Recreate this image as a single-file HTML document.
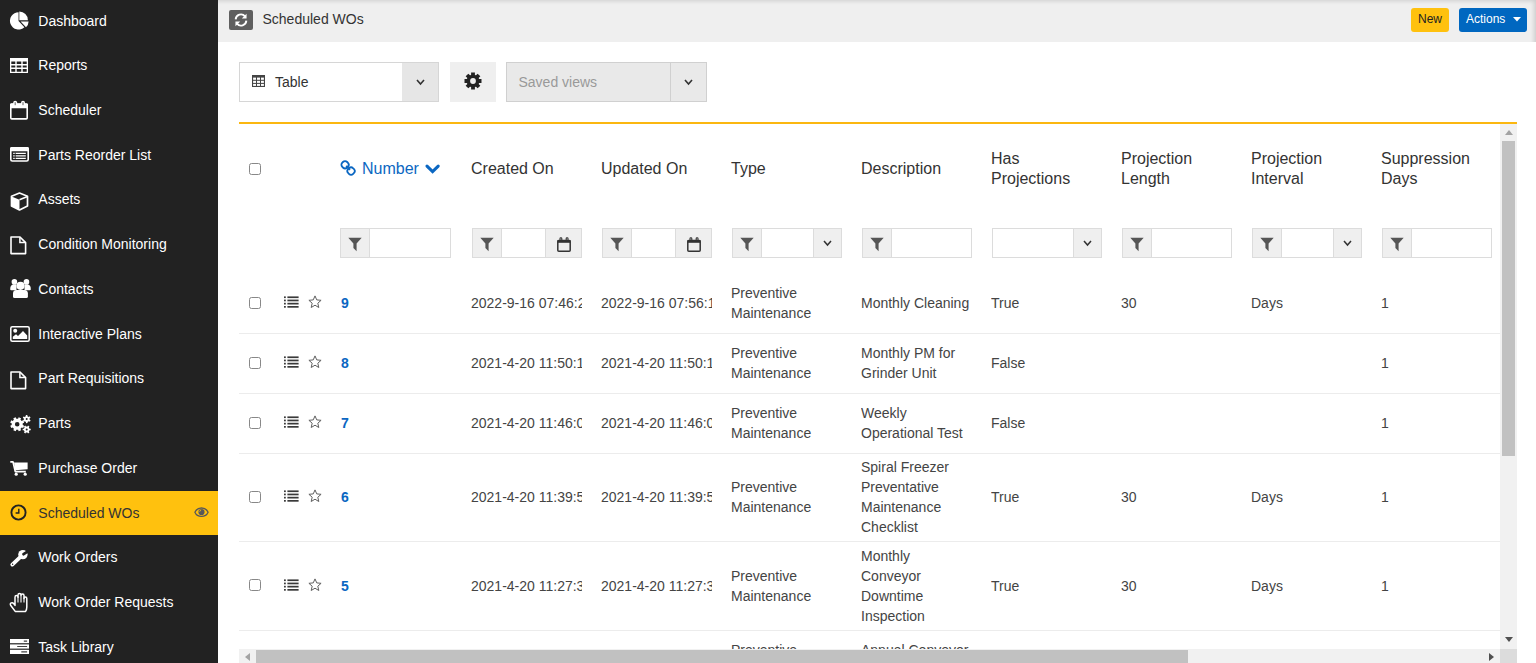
<!DOCTYPE html>
<html><head><meta charset="utf-8">
<style>
*{box-sizing:border-box;margin:0;padding:0}
html,body{width:1536px;height:663px;overflow:hidden;background:#fff;font-family:"Liberation Sans",sans-serif;color:#333}
.abs{position:absolute}
#sb{position:absolute;left:0;top:0;width:218px;height:663px;background:#222;overflow:hidden}
.sbt{font-size:14px;white-space:nowrap}
#hdr{position:absolute;left:218px;top:0;width:1318px;height:41.5px;background:#efefef;box-shadow:inset -4px 3px 4px -2px rgba(0,0,0,.14)}
.th{position:absolute;font-size:16px;line-height:20px;color:#333;white-space:nowrap}
.flt{position:absolute;top:228px;height:30px;border:1px solid #dcdcdc;background:#fff}
.flt .ad{position:absolute;top:0;height:28px;background:#efefef}
.row{position:absolute;left:239px;width:1261px;border-bottom:1px solid #ececec}
.c{position:absolute;display:flex;align-items:center;font-size:14px;line-height:20px;color:#444;overflow:hidden;white-space:nowrap}
.cb{position:absolute;width:12px;height:12px;border:1.2px solid #888;border-radius:2.5px;background:#fff}
</style></head><body>
<div id="sb">
<div class="abs sbt" style="left:38.3px;top:-1.50px;height:44.74px;line-height:44.74px;color:#fff">Dashboard</div>
<svg class="abs" style="left:8px;top:10px" width="22" height="22" viewBox="0 0 22 22" ><path d="M10.55 10.9 V2.3 A8.6 8.6 0 1 0 16.42 17.19 Z" fill="#fff"/><path d="M11.3 10.2 V1.6 A8.6 8.6 0 0 1 19.9 10.2 Z" fill="#fff"/><path d="M12.6 11.4 H20.6 A8.1 8.1 0 0 1 18.0 17.2 Z" fill="#fff"/></svg>
<div class="abs sbt" style="left:38.3px;top:43.24px;height:44.74px;line-height:44.74px;color:#fff">Reports</div>
<svg class="abs" style="left:10px;top:58px" width="18" height="15" viewBox="0 0 18 15" ><rect x="0.5" y="0.5" width="17" height="14" rx="1" fill="none" stroke="#fff" stroke-width="1.6"/><rect x="0" y="0" width="18" height="3.5" fill="#fff"/><path d="M6 3v11M12 3v11M1 6.8h16M1 10.2h16" stroke="#fff" stroke-width="1.4"/></svg>
<div class="abs sbt" style="left:38.3px;top:87.98px;height:44.74px;line-height:44.74px;color:#fff">Scheduler</div>
<svg class="abs" style="left:10px;top:100px" width="18" height="20" viewBox="0 0 18 20" ><rect x="0.8" y="4" width="16.4" height="14.9" rx="1" fill="none" stroke="#fff" stroke-width="1.6"/><rect x="0" y="3.4" width="18" height="4.8" rx="1" fill="#fff"/><rect x="3.2" y="0.8" width="4" height="5.2" rx="2" fill="#fff"/><rect x="11" y="0.8" width="4" height="5.2" rx="2" fill="#fff"/><rect x="4.6" y="2.2" width="1.2" height="3" fill="#222" opacity=".6"/><rect x="12.4" y="2.2" width="1.2" height="3" fill="#222" opacity=".6"/></svg>
<div class="abs sbt" style="left:38.3px;top:132.72px;height:44.74px;line-height:44.74px;color:#fff">Parts Reorder List</div>
<svg class="abs" style="left:10px;top:147px" width="19" height="15" viewBox="0 0 19 15" ><rect x="0.8" y="0.8" width="17.4" height="13.2" rx="1.5" fill="none" stroke="#fff" stroke-width="1.6"/><rect x="0" y="0" width="19" height="4.2" rx="1.5" fill="#fff"/><path d="M3.2 6.4h12.6M3.2 8.9h12.6M3.2 11.4h12.6" stroke="#fff" stroke-width="1.1"/><path d="M5.2 5.5v7" stroke="#222" stroke-width="0.9"/></svg>
<div class="abs sbt" style="left:38.3px;top:177.46px;height:44.74px;line-height:44.74px;color:#fff">Assets</div>
<svg class="abs" style="left:9.5px;top:191.5px" width="19" height="19" viewBox="0 0 19 19" ><path d="M9.5 1 L17.5 4.2 L17.5 14 L9.5 18 L1.5 14 L1.5 4.2 Z" fill="none" stroke="#fff" stroke-width="1.7" stroke-linejoin="round"/><path d="M1.5 4.6 L9.5 7.8 L9.5 18 L1.5 14 Z" fill="#fff"/><path d="M9.5 7.8 L17.5 4.6" stroke="#fff" stroke-width="1.6"/></svg>
<div class="abs sbt" style="left:38.3px;top:222.20px;height:44.74px;line-height:44.74px;color:#fff">Condition Monitoring</div>
<svg class="abs" style="left:10px;top:236px" width="17" height="19" viewBox="0 0 17 19" ><path d="M1 1 H10 L15.6 6.6 V17.6 H1 Z" fill="none" stroke="#fff" stroke-width="1.6" stroke-linejoin="round"/><path d="M9.9 1.2 V6.6 H15.4" fill="none" stroke="#fff" stroke-width="1.5"/></svg>
<div class="abs sbt" style="left:38.3px;top:266.94px;height:44.74px;line-height:44.74px;color:#fff">Contacts</div>
<svg class="abs" style="left:9.8px;top:279.3px" width="21" height="20" viewBox="0 0 21 20" ><circle cx="4.4" cy="2.9" r="2.8" fill="#fff"/><circle cx="16.45" cy="2.9" r="2.8" fill="#fff"/><path d="M0.2 10.2 Q0.2 5.6 3.6 5.6 H6.5 V11.2 H1.2 Q0.2 11.2 0.2 10.2Z" fill="#fff"/><path d="M20.8 10.2 Q20.8 5.6 17.4 5.6 H14.5 V11.2 H19.8 Q20.8 11.2 20.8 10.2Z" fill="#fff"/><circle cx="10.5" cy="6.8" r="4.1" fill="#fff"/><path d="M3 17.6 V14.4 Q3 10.9 6.6 10.9 H14.4 Q17.9 10.9 17.9 14.4 V17.6 Q17.9 19.1 16.4 19.1 H4.5 Q3 19.1 3 17.6Z" fill="#fff"/></svg>
<div class="abs sbt" style="left:38.3px;top:311.68px;height:44.74px;line-height:44.74px;color:#fff">Interactive Plans</div>
<svg class="abs" style="left:10px;top:326px" width="20" height="16" viewBox="0 0 20 16" ><rect x="0.8" y="0.8" width="18.4" height="14.4" rx="1.5" fill="none" stroke="#fff" stroke-width="1.5"/><circle cx="5.2" cy="4.8" r="2" fill="#fff"/><path d="M2.8 13 V10.8 L6 8.2 L8 10 L13 5 L17.2 9.5 V13 Z" fill="#fff"/></svg>
<div class="abs sbt" style="left:38.3px;top:356.42px;height:44.74px;line-height:44.74px;color:#fff">Part Requisitions</div>
<svg class="abs" style="left:10px;top:370.5px" width="17" height="19" viewBox="0 0 17 19" ><path d="M1 1 H10 L15.6 6.6 V17.6 H1 Z" fill="none" stroke="#fff" stroke-width="1.6" stroke-linejoin="round"/><path d="M9.9 1.2 V6.6 H15.4" fill="none" stroke="#fff" stroke-width="1.5"/></svg>
<div class="abs sbt" style="left:38.3px;top:401.16px;height:44.74px;line-height:44.74px;color:#fff">Parts</div>
<svg class="abs" style="left:9.8px;top:414.5px" width="21" height="19" viewBox="0 0 21 19" ><path d="M12.73,10.07 L14.15,10.65 L13.16,13.06 L11.74,12.47 L10.50,13.73 L11.09,15.14 L8.69,16.14 L8.10,14.73 L6.33,14.73 L5.75,16.15 L3.34,15.16 L3.93,13.74 L2.67,12.50 L1.26,13.09 L0.26,10.69 L1.67,10.10 L1.67,8.33 L0.25,7.75 L1.24,5.34 L2.66,5.93 L3.90,4.67 L3.31,3.26 L5.71,2.26 L6.30,3.67 L8.07,3.67 L8.65,2.25 L11.06,3.24 L10.47,4.66 L11.73,5.90 L13.14,5.31 L14.14,7.71 L12.73,8.30 Z M9.5,9.2 A2.3 2.3 0 1 0 4.9,9.2 A2.3 2.3 0 1 0 9.5,9.2Z" fill="#fff" fill-rule="evenodd"/><path d="M19.62,4.78 L20.61,5.33 L19.85,6.73 L18.85,6.19 L17.57,6.97 L17.59,8.10 L16.00,8.14 L15.97,7.01 L14.65,6.29 L13.68,6.88 L12.85,5.51 L13.81,4.92 L13.78,3.42 L12.79,2.87 L13.55,1.47 L14.55,2.01 L15.83,1.23 L15.81,0.10 L17.40,0.06 L17.43,1.19 L18.75,1.91 L19.72,1.32 L20.55,2.69 L19.59,3.28 Z M17.7,4.1 A1.0 1.0 0 1 0 15.7,4.1 A1.0 1.0 0 1 0 17.7,4.1Z" fill="#fff" fill-rule="evenodd"/><path d="M19.59,13.70 L20.72,13.70 L20.72,15.30 L19.59,15.30 L18.84,16.60 L19.40,17.58 L18.02,18.38 L17.45,17.40 L15.95,17.40 L15.38,18.38 L14.00,17.58 L14.56,16.60 L13.81,15.30 L12.68,15.30 L12.68,13.70 L13.81,13.70 L14.56,12.40 L14.00,11.42 L15.38,10.62 L15.95,11.60 L17.45,11.60 L18.02,10.62 L19.40,11.42 L18.84,12.40 Z M17.7,14.5 A1.0 1.0 0 1 0 15.7,14.5 A1.0 1.0 0 1 0 17.7,14.5Z" fill="#fff" fill-rule="evenodd"/></svg>
<div class="abs sbt" style="left:38.3px;top:445.90px;height:44.74px;line-height:44.74px;color:#fff">Purchase Order</div>
<svg class="abs" style="left:10px;top:460.5px" width="19" height="16" viewBox="0 0 19 16" ><path d="M0.3 0.9 H3 L5.3 10.6 H15.8" fill="none" stroke="#fff" stroke-width="1.7" stroke-linejoin="round"/><path d="M4 1.6 H17.6 V8.3 L5.2 9.3 Z" fill="#fff"/><circle cx="6.2" cy="13.2" r="1.6" fill="#fff"/><circle cx="15.2" cy="13.2" r="1.6" fill="#fff"/></svg>
<div class="abs" style="left:0;top:491.3px;width:218px;height:43.4px;background:#ffc10e"></div>
<div class="abs sbt" style="left:38.3px;top:490.64px;height:44.74px;line-height:44.74px;color:#333">Scheduled WOs</div>
<svg class="abs" style="left:10px;top:504px" width="17" height="17" viewBox="0 0 17 17" ><circle cx="8.5" cy="8.5" r="7.1" fill="none" stroke="#222" stroke-width="1.9"/><path d="M8.8 4.8 V9.0 H5.6" fill="none" stroke="#222" stroke-width="1.4"/></svg>
<svg class="abs" style="left:194.3px;top:507.1px" width="16" height="11" viewBox="0 0 16 11" ><path d="M0.9 5.2 C3.4 -0.4, 11.6 -0.4, 14.1 5.2 C11.6 10.8, 3.4 10.8, 0.9 5.2Z" fill="none" stroke="#585858" stroke-width="1.3"/><circle cx="7.5" cy="5.0" r="3.1" fill="#585858"/><path d="M5.7 4.7 Q5.9 3.2 7.2 2.9" fill="none" stroke="#ffc10e" stroke-width="0.9"/></svg>
<div class="abs sbt" style="left:38.3px;top:535.38px;height:44.74px;line-height:44.74px;color:#fff">Work Orders</div>
<svg class="abs" style="left:9px;top:549px" width="20" height="19" viewBox="0 0 20 19" ><line x1="13.6" y1="5.8" x2="3.3" y2="15.6" stroke="#fff" stroke-width="3.8" stroke-linecap="round"/><circle cx="13.9" cy="5.6" r="4.7" fill="#fff"/><path d="M14.6 5.2 L20 1.6" stroke="#222" stroke-width="2.8" stroke-linecap="round"/><circle cx="3.6" cy="15.2" r="0.7" fill="#222"/></svg>
<div class="abs sbt" style="left:38.3px;top:580.12px;height:44.74px;line-height:44.74px;color:#fff">Work Order Requests</div>
<svg class="abs" style="left:9.2px;top:592px" width="20" height="21" viewBox="0 0 20 21" ><path d="M6.2 19.4 L1.6 13.2 Q0.8 11.6 2.3 10.9 Q3.6 10.4 4.6 11.6 L6 13.4 V5.2 Q6 3.6 7.5 3.6 Q9 3.6 9 5.2 V3 Q9 1.4 10.5 1.4 Q12 1.4 12 3 V3.6 Q12 2.1 13.5 2.1 Q15 2.1 15 3.6 V6.4 Q15 5 16.4 5 Q17.8 5 17.8 6.6 V15 Q17.8 17.6 16.6 19.4 Z" fill="none" stroke="#fff" stroke-width="1.5" stroke-linejoin="round"/><path d="M9 4.6V10.6M12 3.6V10.6M15 5.6V10.6" stroke="#fff" stroke-width="1.1"/></svg>
<div class="abs sbt" style="left:38.3px;top:624.86px;height:44.74px;line-height:44.74px;color:#fff">Task Library</div>
<svg class="abs" style="left:10.2px;top:638.7px" width="19" height="15" viewBox="0 0 19 15" ><rect x="0" y="0" width="19" height="4.2" fill="#fff"/><rect x="0" y="5.4" width="19" height="4.2" fill="#fff"/><rect x="0" y="10.8" width="19" height="4.2" fill="#fff"/><path d="M13.8 2.1h3.3M7.2 7.5h9.9M11.3 12.9h5.8" stroke="#222" stroke-width="1.1" opacity=".85"/></svg>
</div>
<div id="hdr"></div>
<svg class="abs" style="left:229px;top:10px" width="24" height="20" viewBox="0 0 24 20" ><rect x="0" y="0" width="24" height="20" rx="2" fill="#5f5f5f"/><g transform="translate(12 10) scale(0.84) translate(-12 -10)"><path d="M5.6 9.2 A6.4 6.4 0 0 1 16.8 5.6" fill="none" stroke="#fff" stroke-width="2.2"/><path d="M18.6 2.6 V8.2 H13 Z" fill="#fff"/><path d="M18.4 10.8 A6.4 6.4 0 0 1 7.2 14.4" fill="none" stroke="#fff" stroke-width="2.2"/><path d="M5.4 17.4 V11.8 H11 Z" fill="#fff"/></g></svg>
<div class="abs" style="left:262.5px;top:9px;font-size:14px;line-height:20px;color:#333">Scheduled WOs</div>
<div class="abs" style="left:1411px;top:8px;width:38px;height:24px;border-radius:3px;background:#ffc10e;color:#222;font-size:12px;line-height:22px;text-align:center">New</div>
<div class="abs" style="left:1459px;top:8px;width:68px;height:24px;border-radius:3px;background:#0067c0;color:#fff;font-size:12px;line-height:22px;padding-left:7px">Actions</div>
<svg class="abs" style="left:1513px;top:16.5px" width="8" height="5" viewBox="0 0 8 5" ><path d="M0 0 H8 L4 4.5Z" fill="#fff"/></svg>

<!-- toolbar -->
<div class="abs" style="left:239px;top:61.5px;width:200px;height:40px;border:1px solid #d6d6d6;background:#fff"></div>
<div class="abs" style="left:402px;top:62.5px;width:36px;height:38px;background:#e6e6e6"></div>
<svg class="abs" style="left:252px;top:75px" width="13" height="12" viewBox="0 0 13 12" ><rect x="0.5" y="0.5" width="12" height="11" fill="none" stroke="#444" stroke-width="1.2"/><rect x="0" y="0" width="13" height="2.6" fill="#444"/><path d="M4.5 2v9.5M8.5 2v9.5M0.5 5.3h12M0.5 8.4h12" stroke="#444" stroke-width="1"/></svg>
<div class="abs" style="left:275px;top:71.5px;font-size:14px;line-height:20px;color:#333">Table</div>
<svg class="abs" style="left:416px;top:78.5px" width="9" height="7" viewBox="0 0 9 7" ><path d="M1 1 L4.5 5 L8 1" fill="none" stroke="#333" stroke-width="1.6"/></svg>
<div class="abs" style="left:449.5px;top:61.5px;width:46.5px;height:40px;background:#efefef"></div>
<svg class="abs" style="left:463.8px;top:72px" width="18" height="18" viewBox="0 0 18 18" ><path d="M15.11,7.10 L17.49,7.10 L17.49,10.90 L15.11,10.90 L14.66,11.98 L16.35,13.66 L13.66,16.35 L11.98,14.66 L10.90,15.11 L10.90,17.49 L7.10,17.49 L7.10,15.11 L6.02,14.66 L4.34,16.35 L1.65,13.66 L3.34,11.98 L2.89,10.90 L0.51,10.90 L0.51,7.10 L2.89,7.10 L3.34,6.02 L1.65,4.34 L4.34,1.65 L6.02,3.34 L7.10,2.89 L7.10,0.51 L10.90,0.51 L10.90,2.89 L11.98,3.34 L13.66,1.65 L16.35,4.34 L14.66,6.02 Z M11.9,9 A2.9 2.9 0 1 0 6.1,9 A2.9 2.9 0 1 0 11.9,9Z" fill="#222" fill-rule="evenodd"/></svg>
<div class="abs" style="left:506px;top:61.5px;width:201px;height:40px;border:1px solid #d0d0d0;background:#e9e9e9"></div>
<div class="abs" style="left:670px;top:62.5px;width:1px;height:38px;background:#d0d0d0"></div>
<div class="abs" style="left:518.5px;top:71.5px;font-size:14px;line-height:20px;color:#999">Saved views</div>
<svg class="abs" style="left:683.5px;top:78.5px" width="9" height="7" viewBox="0 0 9 7" ><path d="M1 1 L4.5 5 L8 1" fill="none" stroke="#333" stroke-width="1.6"/></svg>
<div class="abs" style="left:239px;top:122px;width:1278px;height:2px;background:#fbb710"></div>

<!-- table -->
<svg class="abs" style="left:339px;top:159px" width="18" height="18" viewBox="0 0 18 18" ><g fill="none" stroke="#0b67c2" stroke-width="1.8"><rect x="2.6" y="2.3" width="6.9" height="6.9" rx="3" transform="rotate(45 6.05 5.75)"/><rect x="8.6" y="8.6" width="6.9" height="6.9" rx="3" transform="rotate(45 12.05 12.05)"/></g><path d="M7.2 6.9 L10.9 10.8" stroke="#0b67c2" stroke-width="1.8"/></svg><div class="th" style="left:362px;top:159px;color:#0b67c2">Number</div><svg class="abs" style="left:424px;top:163px" width="17" height="12" viewBox="0 0 17 12" ><path d="M3 3.2 L8.6 8.6 L14.2 3.2" fill="none" stroke="#0b67c2" stroke-width="3.1" stroke-linecap="round"/></svg><div class="th" style="left:471px;top:159px">Created On</div><div class="th" style="left:601px;top:159px">Updated On</div><div class="th" style="left:731px;top:159px">Type</div><div class="th" style="left:861px;top:159px">Description</div><div class="th" style="left:991px;top:149px">Has<br>Projections</div><div class="th" style="left:1121px;top:149px">Projection<br>Length</div><div class="th" style="left:1251px;top:149px">Projection<br>Interval</div><div class="th" style="left:1381px;top:149px">Suppression<br>Days</div><div class="cb" style="left:249px;top:163px"></div>
<div class="flt" style="left:340px;width:111px"><div class="ad" style="left:0;width:29px;border-right:1px solid #dcdcdc"></div></div><svg class="abs" style="left:348px;top:236.5px" width="14" height="15" viewBox="0 0 14 15" ><path d="M0.3 0.8 H13.7 L8.6 6.6 V14.2 L5.4 11 V6.6 Z" fill="#555"/></svg><div class="flt" style="left:472px;width:110px"><div class="ad" style="left:0;width:29px;border-right:1px solid #dcdcdc"></div><div class="ad" style="right:0;width:36px;border-left:1px solid #dcdcdc"></div></div><svg class="abs" style="left:480px;top:236.5px" width="14" height="15" viewBox="0 0 14 15" ><path d="M0.3 0.8 H13.7 L8.6 6.6 V14.2 L5.4 11 V6.6 Z" fill="#555"/></svg><svg class="abs" style="left:557px;top:236.5px" width="14" height="15" viewBox="0 0 14 15" ><rect x="0.8" y="3.4" width="12.4" height="10.8" rx="1" fill="none" stroke="#333" stroke-width="1.5"/><rect x="0.5" y="3" width="13" height="2.8" fill="#333"/><rect x="3" y="0.8" width="1.8" height="3.5" rx=".8" fill="none" stroke="#333" stroke-width="1.1"/><rect x="9.2" y="0.8" width="1.8" height="3.5" rx=".8" fill="none" stroke="#333" stroke-width="1.1"/></svg><div class="flt" style="left:602px;width:110px"><div class="ad" style="left:0;width:29px;border-right:1px solid #dcdcdc"></div><div class="ad" style="right:0;width:36px;border-left:1px solid #dcdcdc"></div></div><svg class="abs" style="left:610px;top:236.5px" width="14" height="15" viewBox="0 0 14 15" ><path d="M0.3 0.8 H13.7 L8.6 6.6 V14.2 L5.4 11 V6.6 Z" fill="#555"/></svg><svg class="abs" style="left:687px;top:236.5px" width="14" height="15" viewBox="0 0 14 15" ><rect x="0.8" y="3.4" width="12.4" height="10.8" rx="1" fill="none" stroke="#333" stroke-width="1.5"/><rect x="0.5" y="3" width="13" height="2.8" fill="#333"/><rect x="3" y="0.8" width="1.8" height="3.5" rx=".8" fill="none" stroke="#333" stroke-width="1.1"/><rect x="9.2" y="0.8" width="1.8" height="3.5" rx=".8" fill="none" stroke="#333" stroke-width="1.1"/></svg><div class="flt" style="left:732px;width:110px"><div class="ad" style="left:0;width:29px;border-right:1px solid #dcdcdc"></div><div class="ad" style="right:0;width:28.5px;border-left:1px solid #dcdcdc"></div></div><svg class="abs" style="left:740px;top:236.5px" width="14" height="15" viewBox="0 0 14 15" ><path d="M0.3 0.8 H13.7 L8.6 6.6 V14.2 L5.4 11 V6.6 Z" fill="#555"/></svg><svg class="abs" style="left:823px;top:240px" width="9" height="7" viewBox="0 0 9 7" ><path d="M1 1 L4.5 5 L8 1" fill="none" stroke="#333" stroke-width="1.5"/></svg><div class="flt" style="left:862px;width:110px"><div class="ad" style="left:0;width:29px;border-right:1px solid #dcdcdc"></div></div><svg class="abs" style="left:870px;top:236.5px" width="14" height="15" viewBox="0 0 14 15" ><path d="M0.3 0.8 H13.7 L8.6 6.6 V14.2 L5.4 11 V6.6 Z" fill="#555"/></svg><div class="flt" style="left:992px;width:110px"><div class="ad" style="right:0;width:28.5px;border-left:1px solid #dcdcdc"></div></div><svg class="abs" style="left:1083px;top:240px" width="9" height="7" viewBox="0 0 9 7" ><path d="M1 1 L4.5 5 L8 1" fill="none" stroke="#333" stroke-width="1.5"/></svg><div class="flt" style="left:1122px;width:110px"><div class="ad" style="left:0;width:29px;border-right:1px solid #dcdcdc"></div></div><svg class="abs" style="left:1130px;top:236.5px" width="14" height="15" viewBox="0 0 14 15" ><path d="M0.3 0.8 H13.7 L8.6 6.6 V14.2 L5.4 11 V6.6 Z" fill="#555"/></svg><div class="flt" style="left:1252px;width:110px"><div class="ad" style="left:0;width:29px;border-right:1px solid #dcdcdc"></div><div class="ad" style="right:0;width:28.5px;border-left:1px solid #dcdcdc"></div></div><svg class="abs" style="left:1260px;top:236.5px" width="14" height="15" viewBox="0 0 14 15" ><path d="M0.3 0.8 H13.7 L8.6 6.6 V14.2 L5.4 11 V6.6 Z" fill="#555"/></svg><svg class="abs" style="left:1343px;top:240px" width="9" height="7" viewBox="0 0 9 7" ><path d="M1 1 L4.5 5 L8 1" fill="none" stroke="#333" stroke-width="1.5"/></svg><div class="flt" style="left:1382px;width:110px"><div class="ad" style="left:0;width:29px;border-right:1px solid #dcdcdc"></div></div><svg class="abs" style="left:1390px;top:236.5px" width="14" height="15" viewBox="0 0 14 15" ><path d="M0.3 0.8 H13.7 L8.6 6.6 V14.2 L5.4 11 V6.6 Z" fill="#555"/></svg>
<div class="row" style="top:273px;height:61px"></div><div class="cb" style="left:249px;top:296.5px"></div><svg class="abs" style="left:283.6px;top:296.4px" width="15" height="13" viewBox="0 0 15 13" ><g fill="#3a3a3a"><rect x="0" y="0.4" width="1.8" height="1.7"/><rect x="0" y="3.6" width="1.8" height="1.7"/><rect x="0" y="6.8" width="1.8" height="1.7"/><rect x="0" y="10" width="1.8" height="1.7"/><rect x="3.4" y="0.4" width="11.2" height="1.7"/><rect x="3.4" y="3.6" width="11.2" height="1.7"/><rect x="3.4" y="6.8" width="11.2" height="1.7"/><rect x="3.4" y="10" width="11.2" height="1.7"/></g></svg><svg class="abs" style="left:307.6px;top:295.0px" width="14" height="14" viewBox="0 0 14 14" ><path d="M7 0.9 L8.75 4.9 L13.1 5.3 L9.8 8.2 L10.8 12.5 L7 10.2 L3.2 12.5 L4.2 8.2 L0.9 5.3 L5.25 4.9 Z" fill="none" stroke="#606060" stroke-width="1.0" stroke-linejoin="round"/></svg><div class="c" style="left:341px;top:273px;height:60px;width:111px;color:#0b67c2;font-weight:bold"><div>9</div></div><div class="c" style="left:471px;top:273px;height:60px;width:111px;"><div>2022-9-16 07:46:22</div></div><div class="c" style="left:601px;top:273px;height:60px;width:111px;"><div>2022-9-16 07:56:13</div></div><div class="c" style="left:731px;top:273px;height:60px;width:111px;"><div>Preventive<br>Maintenance</div></div><div class="c" style="left:861px;top:273px;height:60px;width:111px;"><div>Monthly Cleaning</div></div><div class="c" style="left:991px;top:273px;height:60px;width:111px;"><div>True</div></div><div class="c" style="left:1121px;top:273px;height:60px;width:111px;"><div>30</div></div><div class="c" style="left:1251px;top:273px;height:60px;width:111px;"><div>Days</div></div><div class="c" style="left:1381px;top:273px;height:60px;width:111px;"><div>1</div></div><div class="row" style="top:333px;height:61px"></div><div class="cb" style="left:249px;top:356.5px"></div><svg class="abs" style="left:283.6px;top:356.4px" width="15" height="13" viewBox="0 0 15 13" ><g fill="#3a3a3a"><rect x="0" y="0.4" width="1.8" height="1.7"/><rect x="0" y="3.6" width="1.8" height="1.7"/><rect x="0" y="6.8" width="1.8" height="1.7"/><rect x="0" y="10" width="1.8" height="1.7"/><rect x="3.4" y="0.4" width="11.2" height="1.7"/><rect x="3.4" y="3.6" width="11.2" height="1.7"/><rect x="3.4" y="6.8" width="11.2" height="1.7"/><rect x="3.4" y="10" width="11.2" height="1.7"/></g></svg><svg class="abs" style="left:307.6px;top:355.0px" width="14" height="14" viewBox="0 0 14 14" ><path d="M7 0.9 L8.75 4.9 L13.1 5.3 L9.8 8.2 L10.8 12.5 L7 10.2 L3.2 12.5 L4.2 8.2 L0.9 5.3 L5.25 4.9 Z" fill="none" stroke="#606060" stroke-width="1.0" stroke-linejoin="round"/></svg><div class="c" style="left:341px;top:333px;height:60px;width:111px;color:#0b67c2;font-weight:bold"><div>8</div></div><div class="c" style="left:471px;top:333px;height:60px;width:111px;"><div>2021-4-20 11:50:12</div></div><div class="c" style="left:601px;top:333px;height:60px;width:111px;"><div>2021-4-20 11:50:12</div></div><div class="c" style="left:731px;top:333px;height:60px;width:111px;"><div>Preventive<br>Maintenance</div></div><div class="c" style="left:861px;top:333px;height:60px;width:111px;"><div>Monthly PM for<br>Grinder Unit</div></div><div class="c" style="left:991px;top:333px;height:60px;width:111px;"><div>False</div></div><div class="c" style="left:1121px;top:333px;height:60px;width:111px;"><div></div></div><div class="c" style="left:1251px;top:333px;height:60px;width:111px;"><div></div></div><div class="c" style="left:1381px;top:333px;height:60px;width:111px;"><div>1</div></div><div class="row" style="top:393px;height:61px"></div><div class="cb" style="left:249px;top:416.5px"></div><svg class="abs" style="left:283.6px;top:416.4px" width="15" height="13" viewBox="0 0 15 13" ><g fill="#3a3a3a"><rect x="0" y="0.4" width="1.8" height="1.7"/><rect x="0" y="3.6" width="1.8" height="1.7"/><rect x="0" y="6.8" width="1.8" height="1.7"/><rect x="0" y="10" width="1.8" height="1.7"/><rect x="3.4" y="0.4" width="11.2" height="1.7"/><rect x="3.4" y="3.6" width="11.2" height="1.7"/><rect x="3.4" y="6.8" width="11.2" height="1.7"/><rect x="3.4" y="10" width="11.2" height="1.7"/></g></svg><svg class="abs" style="left:307.6px;top:415.0px" width="14" height="14" viewBox="0 0 14 14" ><path d="M7 0.9 L8.75 4.9 L13.1 5.3 L9.8 8.2 L10.8 12.5 L7 10.2 L3.2 12.5 L4.2 8.2 L0.9 5.3 L5.25 4.9 Z" fill="none" stroke="#606060" stroke-width="1.0" stroke-linejoin="round"/></svg><div class="c" style="left:341px;top:393px;height:60px;width:111px;color:#0b67c2;font-weight:bold"><div>7</div></div><div class="c" style="left:471px;top:393px;height:60px;width:111px;"><div>2021-4-20 11:46:08</div></div><div class="c" style="left:601px;top:393px;height:60px;width:111px;"><div>2021-4-20 11:46:08</div></div><div class="c" style="left:731px;top:393px;height:60px;width:111px;"><div>Preventive<br>Maintenance</div></div><div class="c" style="left:861px;top:393px;height:60px;width:111px;"><div>Weekly<br>Operational Test</div></div><div class="c" style="left:991px;top:393px;height:60px;width:111px;"><div>False</div></div><div class="c" style="left:1121px;top:393px;height:60px;width:111px;"><div></div></div><div class="c" style="left:1251px;top:393px;height:60px;width:111px;"><div></div></div><div class="c" style="left:1381px;top:393px;height:60px;width:111px;"><div>1</div></div><div class="row" style="top:453px;height:89px"></div><div class="cb" style="left:249px;top:490.5px"></div><svg class="abs" style="left:283.6px;top:490.4px" width="15" height="13" viewBox="0 0 15 13" ><g fill="#3a3a3a"><rect x="0" y="0.4" width="1.8" height="1.7"/><rect x="0" y="3.6" width="1.8" height="1.7"/><rect x="0" y="6.8" width="1.8" height="1.7"/><rect x="0" y="10" width="1.8" height="1.7"/><rect x="3.4" y="0.4" width="11.2" height="1.7"/><rect x="3.4" y="3.6" width="11.2" height="1.7"/><rect x="3.4" y="6.8" width="11.2" height="1.7"/><rect x="3.4" y="10" width="11.2" height="1.7"/></g></svg><svg class="abs" style="left:307.6px;top:489.0px" width="14" height="14" viewBox="0 0 14 14" ><path d="M7 0.9 L8.75 4.9 L13.1 5.3 L9.8 8.2 L10.8 12.5 L7 10.2 L3.2 12.5 L4.2 8.2 L0.9 5.3 L5.25 4.9 Z" fill="none" stroke="#606060" stroke-width="1.0" stroke-linejoin="round"/></svg><div class="c" style="left:341px;top:453px;height:88px;width:111px;color:#0b67c2;font-weight:bold"><div>6</div></div><div class="c" style="left:471px;top:453px;height:88px;width:111px;"><div>2021-4-20 11:39:55</div></div><div class="c" style="left:601px;top:453px;height:88px;width:111px;"><div>2021-4-20 11:39:55</div></div><div class="c" style="left:731px;top:453px;height:88px;width:111px;"><div>Preventive<br>Maintenance</div></div><div class="c" style="left:861px;top:453px;height:88px;width:111px;"><div>Spiral Freezer<br>Preventative<br>Maintenance<br>Checklist</div></div><div class="c" style="left:991px;top:453px;height:88px;width:111px;"><div>True</div></div><div class="c" style="left:1121px;top:453px;height:88px;width:111px;"><div>30</div></div><div class="c" style="left:1251px;top:453px;height:88px;width:111px;"><div>Days</div></div><div class="c" style="left:1381px;top:453px;height:88px;width:111px;"><div>1</div></div><div class="row" style="top:541px;height:90px"></div><div class="cb" style="left:249px;top:579.0px"></div><svg class="abs" style="left:283.6px;top:578.9px" width="15" height="13" viewBox="0 0 15 13" ><g fill="#3a3a3a"><rect x="0" y="0.4" width="1.8" height="1.7"/><rect x="0" y="3.6" width="1.8" height="1.7"/><rect x="0" y="6.8" width="1.8" height="1.7"/><rect x="0" y="10" width="1.8" height="1.7"/><rect x="3.4" y="0.4" width="11.2" height="1.7"/><rect x="3.4" y="3.6" width="11.2" height="1.7"/><rect x="3.4" y="6.8" width="11.2" height="1.7"/><rect x="3.4" y="10" width="11.2" height="1.7"/></g></svg><svg class="abs" style="left:307.6px;top:577.5px" width="14" height="14" viewBox="0 0 14 14" ><path d="M7 0.9 L8.75 4.9 L13.1 5.3 L9.8 8.2 L10.8 12.5 L7 10.2 L3.2 12.5 L4.2 8.2 L0.9 5.3 L5.25 4.9 Z" fill="none" stroke="#606060" stroke-width="1.0" stroke-linejoin="round"/></svg><div class="c" style="left:341px;top:541px;height:89px;width:111px;color:#0b67c2;font-weight:bold"><div>5</div></div><div class="c" style="left:471px;top:541px;height:89px;width:111px;"><div>2021-4-20 11:27:33</div></div><div class="c" style="left:601px;top:541px;height:89px;width:111px;"><div>2021-4-20 11:27:33</div></div><div class="c" style="left:731px;top:541px;height:89px;width:111px;"><div>Preventive<br>Maintenance</div></div><div class="c" style="left:861px;top:541px;height:89px;width:111px;"><div>Monthly<br>Conveyor<br>Downtime<br>Inspection</div></div><div class="c" style="left:991px;top:541px;height:89px;width:111px;"><div>True</div></div><div class="c" style="left:1121px;top:541px;height:89px;width:111px;"><div>30</div></div><div class="c" style="left:1251px;top:541px;height:89px;width:111px;"><div>Days</div></div><div class="c" style="left:1381px;top:541px;height:89px;width:111px;"><div>1</div></div><div class="row" style="top:630px;height:61px"></div><div class="cb" style="left:249px;top:653.5px"></div><svg class="abs" style="left:283.6px;top:653.4px" width="15" height="13" viewBox="0 0 15 13" ><g fill="#3a3a3a"><rect x="0" y="0.4" width="1.8" height="1.7"/><rect x="0" y="3.6" width="1.8" height="1.7"/><rect x="0" y="6.8" width="1.8" height="1.7"/><rect x="0" y="10" width="1.8" height="1.7"/><rect x="3.4" y="0.4" width="11.2" height="1.7"/><rect x="3.4" y="3.6" width="11.2" height="1.7"/><rect x="3.4" y="6.8" width="11.2" height="1.7"/><rect x="3.4" y="10" width="11.2" height="1.7"/></g></svg><svg class="abs" style="left:307.6px;top:652.0px" width="14" height="14" viewBox="0 0 14 14" ><path d="M7 0.9 L8.75 4.9 L13.1 5.3 L9.8 8.2 L10.8 12.5 L7 10.2 L3.2 12.5 L4.2 8.2 L0.9 5.3 L5.25 4.9 Z" fill="none" stroke="#606060" stroke-width="1.0" stroke-linejoin="round"/></svg><div class="c" style="left:341px;top:630px;height:60px;width:111px;color:#0b67c2;font-weight:bold"><div>4</div></div><div class="c" style="left:471px;top:630px;height:60px;width:111px;"><div>2021-4-20 11:20:00</div></div><div class="c" style="left:601px;top:630px;height:60px;width:111px;"><div>2021-4-20 11:20:00</div></div><div class="c" style="left:731px;top:630px;height:60px;width:111px;"><div>Preventive<br>Maintenance</div></div><div class="c" style="left:861px;top:630px;height:60px;width:111px;"><div>Annual Conveyor<br>Inspection</div></div><div class="c" style="left:991px;top:630px;height:60px;width:111px;"><div>True</div></div><div class="c" style="left:1121px;top:630px;height:60px;width:111px;"><div>30</div></div><div class="c" style="left:1251px;top:630px;height:60px;width:111px;"><div>Days</div></div><div class="c" style="left:1381px;top:630px;height:60px;width:111px;"><div>1</div></div>

<!-- scrollbars -->
<div class="abs" style="left:1500px;top:124px;width:17px;height:524.5px;background:#f1f1f1"></div>
<div class="abs" style="left:1501.5px;top:140.5px;width:13.5px;height:315px;background:#c1c1c1"></div>
<svg class="abs" style="left:1504.5px;top:130px" width="8" height="5" viewBox="0 0 8 5" ><path d="M0 5 H8 L4 0Z" fill="#a3a3a3"/></svg>
<svg class="abs" style="left:1504.5px;top:637px" width="8" height="5" viewBox="0 0 8 5" ><path d="M0 0 H8 L4 5Z" fill="#505050"/></svg>
<div class="abs" style="left:239px;top:648.5px;width:1261px;height:15px;background:#f1f1f1"></div>
<div class="abs" style="left:256px;top:650px;width:932px;height:13px;background:#c1c1c1"></div>
<div class="abs" style="left:1500px;top:648.5px;width:17px;height:15px;background:#dcdcdc"></div>
<svg class="abs" style="left:245px;top:653px" width="5" height="8" viewBox="0 0 5 8" ><path d="M5 0 V8 L0 4Z" fill="#a3a3a3"/></svg>
<svg class="abs" style="left:1489px;top:653px" width="5" height="8" viewBox="0 0 5 8" ><path d="M0 0 V8 L5 4Z" fill="#505050"/></svg>
</body></html>
